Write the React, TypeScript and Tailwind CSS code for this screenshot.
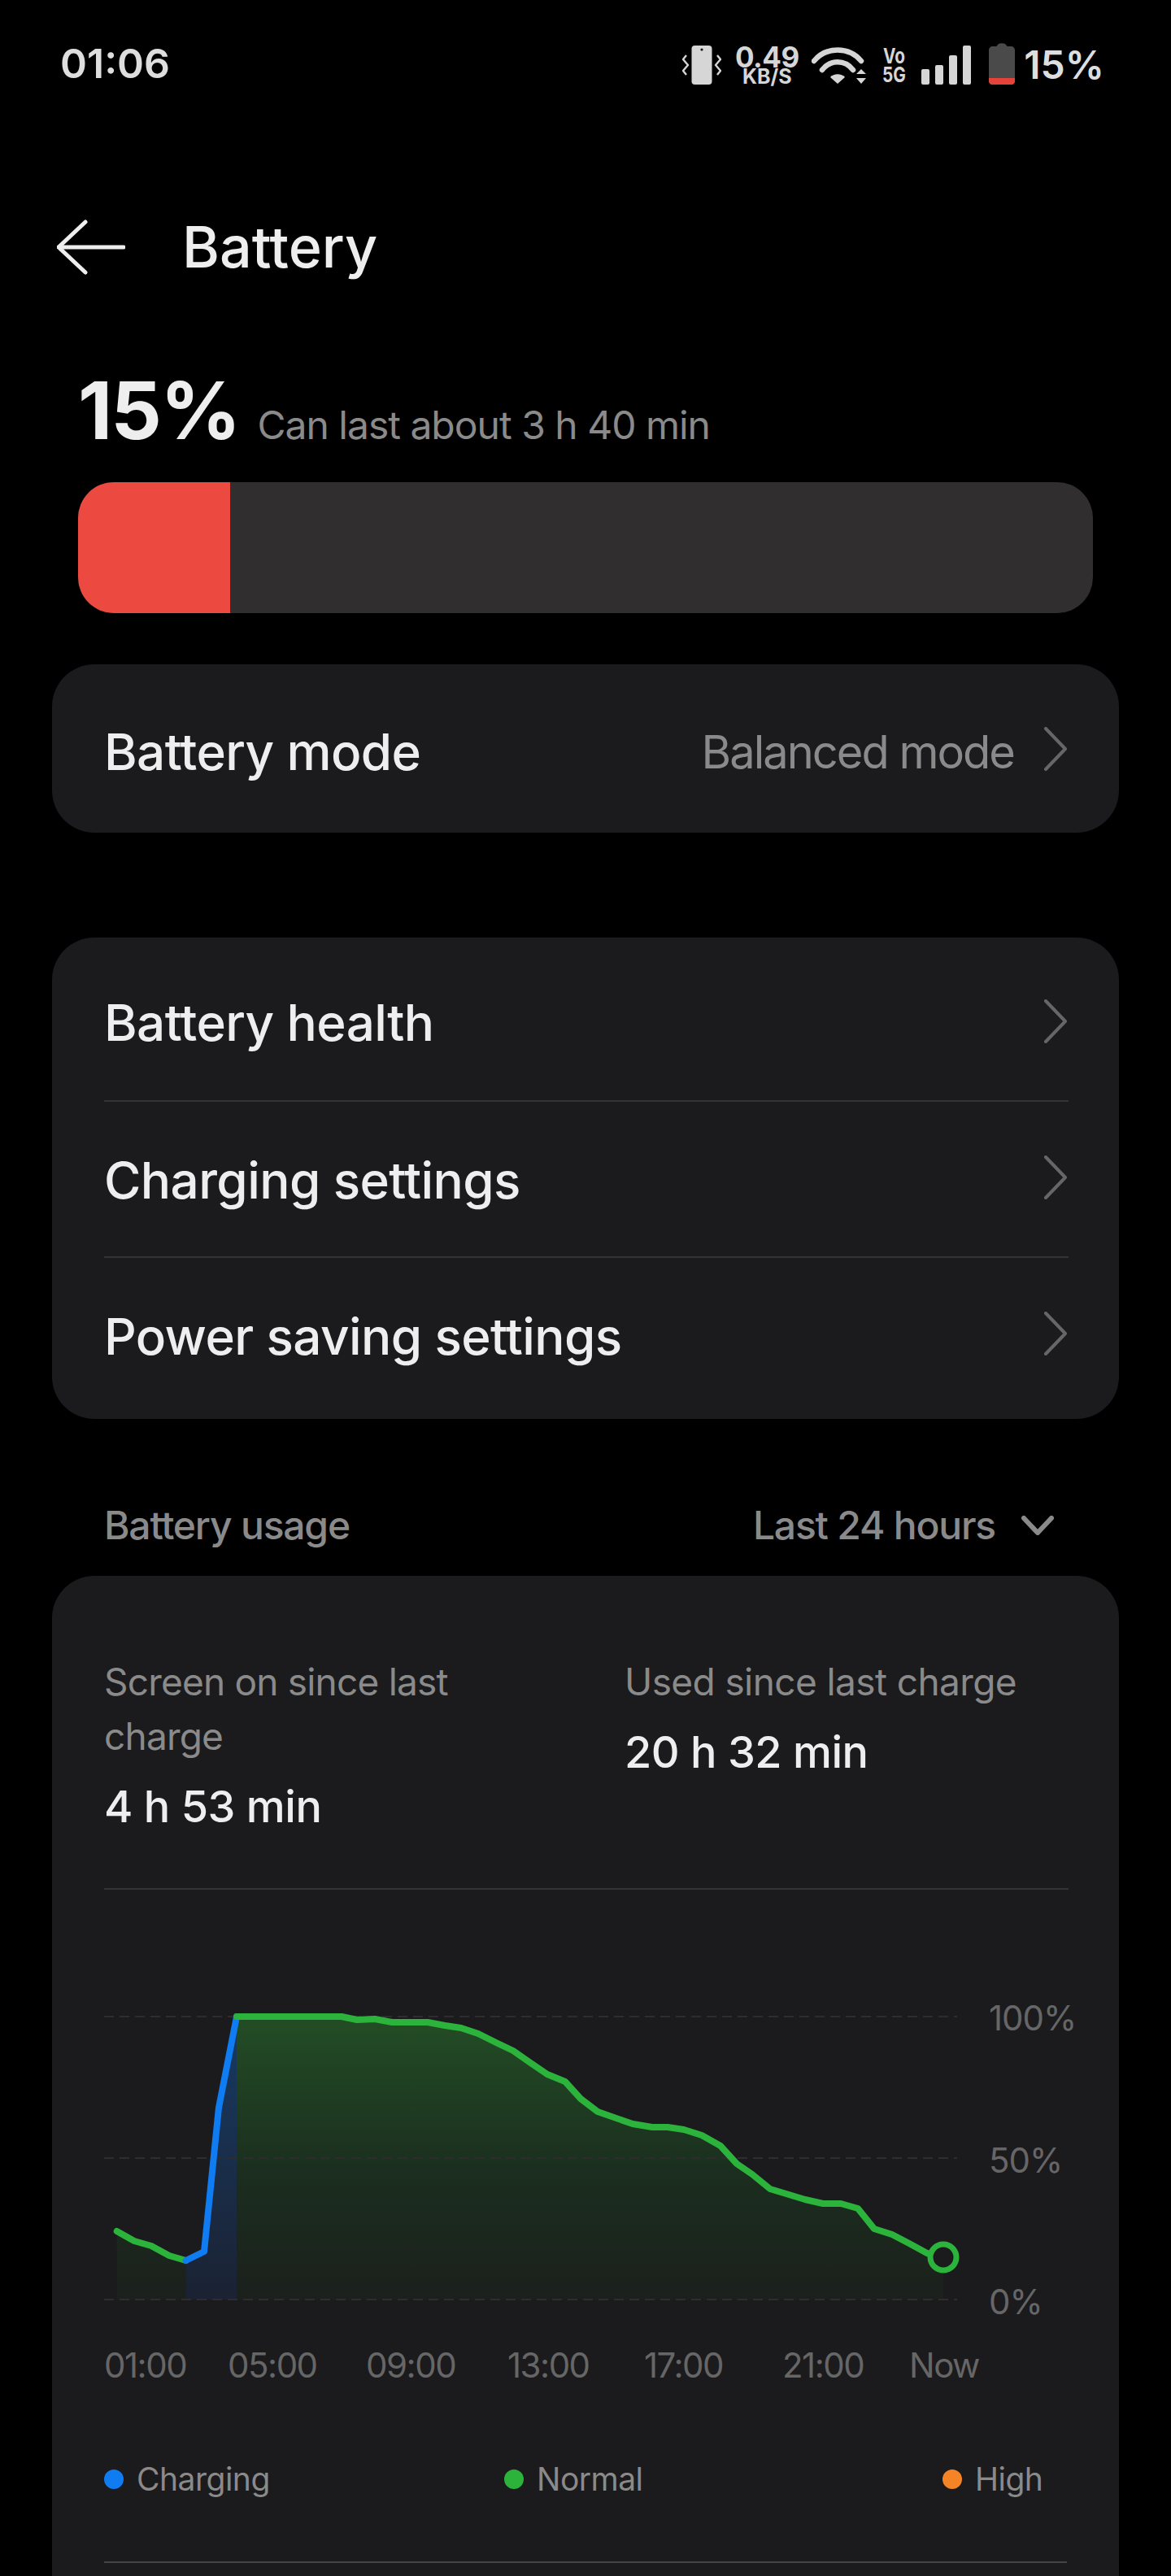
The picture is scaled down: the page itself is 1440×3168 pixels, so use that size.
import React from 'react';

const FONT = "font-['Inter','Noto_Sans',sans-serif]";

const GREEN_A = '143.7,2745 165,2757 186,2763 208,2775 228.6,2781';
const BLUE = '228.6,2781 251,2770 269,2593 291,2481';
const GREEN_B =
  '291,2481 420,2481 439,2485 461,2484 482,2488 526,2488 547,2492 567,2495 588,2502 610,2513 631,2523 651,2537 673,2552 695,2561 714,2582 735,2598 778,2613 802,2617 821,2617 841,2620 863,2627 886,2640 906,2662 925,2675 947,2693 990,2706 1012,2711 1034,2711 1055,2717 1075,2742 1097,2749 1118,2760 1140,2772 1160,2777';

const Chevron = () => (
  <svg width="30" height="54" viewBox="0 0 30 54" fill="none">
    <path d="M3 2 L27 27 L3 52" stroke="#666666" strokeWidth="4" strokeLinecap="round" strokeLinejoin="round" />
  </svg>
);

const StatusIcons = () => (
  <div className="flex items-center pt-[4px]">
    {/* vibrate */}
    <svg width="48" height="48" viewBox="0 0 48 48" className="mr-[17px]" fill="none">
      <rect x="11.5" y="0" width="25" height="48" rx="4" fill="#d6d6d6" />
      <circle cx="24" cy="5" r="1.6" fill="#111" />
      <path d="M5 12 L1 17 L7 24 L1 31 L5 36" stroke="#d6d6d6" strokeWidth="2.4" strokeLinejoin="round" />
      <path d="M43 12 L47 17 L41 24 L47 31 L43 36" stroke="#d6d6d6" strokeWidth="2.4" strokeLinejoin="round" />
    </svg>
    {/* net speed */}
    <div className="mr-[16px] flex w-[78px] flex-col items-center font-bold text-[#d6d6d6]">
      <span className="text-[35px] leading-[28px] tracking-[-0.5px]">0.49</span>
      <span className="text-[25px] leading-[20px]">KB/S</span>
    </div>
    {/* wifi */}
    <svg width="67" height="46" viewBox="0 0 67 46" className="mr-[22px]" fill="none">
      <path d="M3 18 C18 0 46 0 61 18" stroke="#d6d6d6" strokeWidth="6.5" strokeLinecap="round" />
      <path d="M13 29 C23 16 41 16 51 29" stroke="#d6d6d6" strokeWidth="6.5" strokeLinecap="round" />
      <path d="M23 38 C27 33 37 33 41 38 L32 46 Z" fill="#d6d6d6" />
      <path d="M55 34 L61 28 L67 34 Z M55 39 L67 39 L61 46 Z" fill="#d6d6d6" />
    </svg>
    {/* volte */}
    <div className="mr-[21px] flex w-[25px] scale-x-[0.8] flex-col items-center font-bold text-[#d6d6d6]">
      <span className="text-[26px] leading-[23px]">Vo</span>
      <span className="text-[26px] leading-[23px]">5G</span>
    </div>
    {/* signal */}
    <div className="mr-[22px] flex h-[48px] items-end gap-[7px]">
      <div className="h-[19px] w-[10px] rounded-[2px] bg-[#d6d6d6]" />
      <div className="h-[24px] w-[10px] rounded-[2px] bg-[#d6d6d6]" />
      <div className="h-[36px] w-[10px] rounded-[2px] bg-[#d6d6d6]" />
      <div className="h-[48px] w-[10px] rounded-[2px] bg-[#d6d6d6]" />
    </div>
    {/* battery */}
    <svg width="32" height="51" viewBox="0 0 32 51" className="mr-[11px] -mt-[3px]">
      <path d="M10 4 C10 -1 22 -1 22 4 L27 4 C30 4 32 6 32 9 L32 47 C32 49 30 51 28 51 L4 51 C2 51 0 49 0 47 L0 9 C0 6 2 4 5 4 Z" fill="#4a4a4a" />
      <path d="M0 43 L32 43 L32 47 C32 49 30 51 28 51 L4 51 C2 51 0 49 0 47 Z" fill="#e5423a" />
    </svg>
    <span className="text-[48px] leading-[48px] font-semibold text-[#dedede]">15%</span>
  </div>
);

const Row = ({
  label,
  value,
  className,
  labelClass,
  chevronClass,
}: {
  label: string;
  value?: string;
  className: string;
  labelClass?: string;
  chevronClass?: string;
}) => (
  <div className={`flex items-center justify-between pr-[63px] pl-[64px] ${className}`}>
    <span className={`text-[62px] leading-[80px] font-medium tracking-[-0.6px] text-[#eeeeee] ${labelClass ?? ''}`}>{label}</span>
    <div className="flex items-center gap-[36px]">
      {value && <span className="pt-[8px] text-[56px] leading-[70px] tracking-[-2px] text-[#8a8a8a]">{value}</span>}
      <div className={chevronClass}>
        <Chevron />
      </div>
    </div>
  </div>
);

const Chart = () => (
  <svg width="1060" height="399" viewBox="128 2458 1060 399" fill="none" className="shrink-0">
    <defs>
      <linearGradient id="greenFill" gradientUnits="userSpaceOnUse" x1="0" y1="2481" x2="0" y2="2829">
        <stop offset="0" stopColor="#234d25" />
        <stop offset="0.55" stopColor="#1b2e1f" />
        <stop offset="1" stopColor="#1b201c" />
      </linearGradient>
      <linearGradient id="blueFill" gradientUnits="userSpaceOnUse" x1="0" y1="2481" x2="0" y2="2829">
        <stop offset="0" stopColor="#163a63" />
        <stop offset="0.6" stopColor="#1a2c46" />
        <stop offset="1" stopColor="#1a2233" />
      </linearGradient>
    </defs>
    <polygon points={`${GREEN_A} 228.6,2829 143.7,2829`} fill="url(#greenFill)" />
    <polygon points={`${BLUE} 291,2829 228.6,2829`} fill="url(#blueFill)" />
    <polygon points={`${GREEN_B} 1160,2829 291,2829`} fill="url(#greenFill)" />
    {[2481, 2655, 2829].map((y) => (
      <line key={y} x1="128" x2="1177" y1={y} y2={y} stroke="#2d2d2d" strokeWidth="2" strokeDasharray="12 7" />
    ))}
    <polyline points={GREEN_A} stroke="#2cb33c" strokeWidth="8" strokeLinejoin="round" strokeLinecap="round" />
    <polyline points={BLUE} stroke="#0f7cf2" strokeWidth="8" strokeLinejoin="round" strokeLinecap="round" />
    <polyline points={GREEN_B} stroke="#2cb33c" strokeWidth="8" strokeLinejoin="round" strokeLinecap="round" />
    <circle cx="1160" cy="2777" r="16" fill="#1b1a1c" stroke="#2cb33c" strokeWidth="7" />
  </svg>
);

const Legend = ({ color, label }: { color: string; label: string }) => (
  <div className="flex items-center gap-[16px]">
    <div className={`h-[24px] w-[24px] rounded-full ${color}`} />
    <span className="text-[39px] leading-[60px] tracking-[-0.5px] text-[#8a8a8a]">{label}</span>
  </div>
);

export default function App() {
  return (
    <div className={`h-[3168px] w-[1440px] overflow-hidden bg-black ${FONT}`}>
      {/* Status bar */}
      <div className="flex h-[156px] items-center justify-between pr-[82px] pl-[74px]">
        <span className="text-[50px] leading-[60px] font-semibold text-[#dedede]">01:06</span>
        <StatusIcons />
      </div>

      {/* Header */}
      <div className="flex h-[296px] items-center pl-[70px]">
        <svg width="84" height="68" viewBox="0 0 84 68" fill="none" className="mr-[70px]">
          <path d="M35 3 L2 34 L35 65 M2 34 L82 34" stroke="#eeeeee" strokeWidth="5" strokeLinecap="round" strokeLinejoin="round" />
        </svg>
        <h1 className="text-[70px] leading-[90px] font-medium text-[#eeeeee]">Battery</h1>
      </div>

      {/* Level */}
      <div className="flex h-[141px] items-baseline gap-[22px] pl-[96px]">
        <span className="text-[98px] leading-[106px] font-bold tracking-[-2px] text-[#eeeeee]">15%</span>
        <span className="text-[48px] leading-[60px] tracking-[-1px] text-[#8a8a8a]">Can last about 3 h 40 min</span>
      </div>
      <div className="mx-[96px] h-[161px] overflow-hidden rounded-[44px] bg-[#302e2f]">
        <div className="h-full w-[187px] bg-[#ec4a41]" />
      </div>

      {/* Battery mode */}
      <div className="mx-[64px] mt-[63px] rounded-[52px] bg-[#1b1a1c]">
        <Row label="Battery mode" value="Balanced mode" className="h-[207px]" labelClass="pt-[8px]" />
      </div>

      {/* Settings */}
      <div className="mx-[64px] mt-[129px] rounded-[52px] bg-[#1b1a1c]">
        <Row label="Battery health" className="h-[200px]" labelClass="pt-[10px]" chevronClass="pt-[6px]" />
        <div className="mr-[62px] ml-[64px] h-[2px] bg-[#333333]" />
        <Row label="Charging settings" className="h-[190px]" labelClass="pt-[4px]" chevronClass="pb-[4px]" />
        <div className="mr-[62px] ml-[64px] h-[2px] bg-[#333333]" />
        <Row label="Power saving settings" className="h-[198px]" labelClass="pb-[4px]" chevronClass="pb-[12px]" />
      </div>

      {/* Usage */}
      <div className="flex h-[193px] items-end justify-between pr-[144px] pb-[32px] pl-[128px]">
        <span className="text-[48px] leading-[60px] font-medium tracking-[-1.2px] text-[#8a8a8a]">Battery usage</span>
        <div className="flex items-center gap-[32px]">
          <span className="text-[48px] leading-[60px] font-medium tracking-[-1.2px] text-[#8a8a8a]">Last 24 hours</span>
          <svg width="40" height="24" viewBox="0 0 40 24" fill="none">
            <path d="M3 3 L20 21 L37 3" stroke="#8a8a8a" strokeWidth="6" strokeLinecap="round" strokeLinejoin="round" />
          </svg>
        </div>
      </div>

      <div className="mx-[64px] h-[1300px] rounded-t-[52px] bg-[#1b1a1c] px-[64px] pt-[97px]">
        <div className="grid grid-cols-[640px_1fr]">
          <div>
            <p className="w-[520px] text-[46px] leading-[67px] tracking-[-0.8px] text-[#8a8a8a]">Screen on since last charge</p>
            <p className="mt-[18px] text-[54px] leading-[70px] font-medium tracking-[-0.5px] text-[#eeeeee]">4 h 53 min</p>
          </div>
          <div>
            <p className="text-[46px] leading-[67px] tracking-[-0.6px] text-[#8a8a8a]">Used since last charge</p>
            <p className="mt-[18px] text-[54px] leading-[70px] font-medium tracking-[-0.5px] text-[#eeeeee]">20 h 32 min</p>
          </div>
        </div>
        <div className="mt-[65px] mr-[-2px] h-[2px] bg-[#333333]" />

        {/* Chart */}
        <div className="mt-[133px] flex">
          <Chart />
          <div className="ml-[28px] flex h-[399px] flex-col justify-between text-[42px] leading-[50px] tracking-[-1px] text-[#666666]">
            <span>100%</span>
            <span>50%</span>
            <span>0%</span>
          </div>
        </div>
        <div className="mt-[25px] grid grid-cols-[152px_170px_174px_168px_170px_156px_auto] text-[42px] leading-[56px] tracking-[-1.5px] text-[#666666]">
          <span>01:00</span>
          <span>05:00</span>
          <span>09:00</span>
          <span>13:00</span>
          <span>17:00</span>
          <span>21:00</span>
          <span>Now</span>
        </div>

        {/* Legend */}
        <div className="mt-[82px] grid grid-cols-[492px_539px_auto]">
          <Legend color="bg-[#0f7cf2]" label="Charging" />
          <Legend color="bg-[#2cb33c]" label="Normal" />
          <Legend color="bg-[#f58426]" label="High" />
        </div>
        <div className="mt-[71px] h-[2px] bg-[#444444]" />
      </div>
    </div>
  );
}
